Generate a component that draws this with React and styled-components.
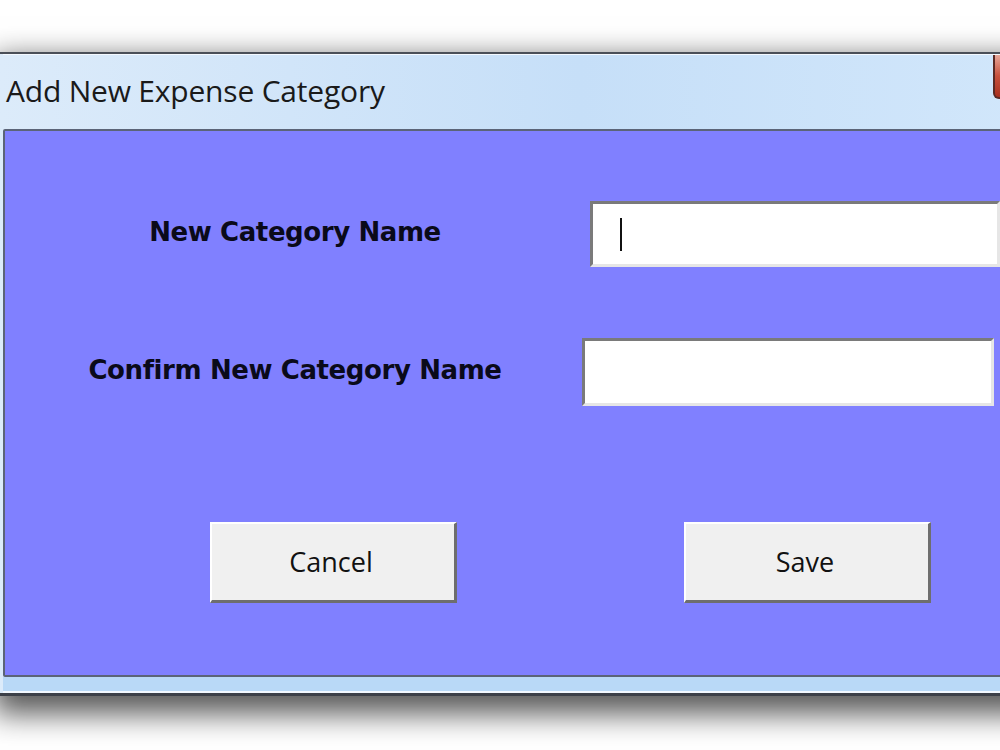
import React from 'react';
import styled, { createGlobalStyle } from 'styled-components';

const GlobalStyle = createGlobalStyle`
  html, body {
    margin: 0;
    padding: 0;
    background: #fff;
  }
`;

const Page = styled.div`
  width: 1000px;
  height: 750px;
  overflow: hidden;
  padding-top: 52px;
  box-sizing: border-box;
  background: #fff;
`;

const Window = styled.div`
  width: 1055px;
  box-sizing: border-box;
  border-top: 2px solid #4a4f58;
  border-bottom: 3px solid #3c4048;
  background: linear-gradient(90deg, #dcebfa 0%, #c6dff8 55%, #d2e7fb 100%);
  box-shadow: 0 12px 28px 6px rgba(0, 0, 0, 0.65);
  padding: 0 12px 0 3px;
`;

const TitleBar = styled.div`
  display: flex;
  justify-content: space-between;
  align-items: flex-start;
  height: 74px;
  border-top: 1px solid #f4f9ff;
`;

const Title = styled.div`
  padding: 15px 0 0 3px;
  font-family: "Open Sans", "Noto Sans", sans-serif;
  font-size: 30px;
  color: #1a1a1a;
  letter-spacing: -0.2px;
`;

const CloseButton = styled.div`
  width: 50px;
  height: 44px;
  box-sizing: border-box;
  border: 2px solid #5a2a25;
  border-top: none;
  border-radius: 0 0 6px 6px;
  background: linear-gradient(180deg, #e8a89a 0%, #c7503c 50%, #a8301f 100%);
`;

const Client = styled.div`
  height: 548px;
  box-sizing: border-box;
  border: 2px solid #5b6478;
  border-radius: 2px;
  background: #8080ff;
  padding-top: 70px;
  display: flex;
  flex-direction: column;
`;

const Row = styled.div`
  display: flex;
  align-items: center;
  margin-bottom: ${p => p.$gap}px;
`;

const Label = styled.div`
  width: 580px;
  padding-bottom: 4px;
  text-align: center;
  font-family: "DejaVu Sans", Verdana, sans-serif;
  font-weight: bold;
  font-size: 26px;
  color: #0a0a1a;
  letter-spacing: -0.4px;
`;

const Field = styled.div`
  margin-left: ${p => p.$indent}px;
  width: ${p => p.$width}px;
  height: ${p => p.$height}px;
  box-sizing: border-box;
  background: #fff;
  border-top: 3px solid #7a7a7a;
  border-left: 3px solid #7a7a7a;
  border-bottom: 3px solid #e6e6e6;
  border-right: 3px solid #e6e6e6;
  display: flex;
  align-items: center;
  padding-left: 27px;
`;

const Caret = styled.span`
  width: 2px;
  height: 33px;
  background: #111;
`;

const Buttons = styled.div`
  display: flex;
  gap: 227px;
  padding-left: 205px;
  margin-top: 116px;
`;

const Button = styled.button`
  width: 247px;
  height: 81px;
  box-sizing: border-box;
  background: #f0f0f0;
  border-top: 2px solid #ffffff;
  border-left: 2px solid #ffffff;
  border-bottom: 3px solid #6e6e6e;
  border-right: 3px solid #6e6e6e;
  font-family: "Open Sans", "Noto Sans", sans-serif;
  font-size: 27px;
  color: #111;
  padding: 0 4px 2px 0;
  cursor: pointer;
`;

const Footer = styled.div`
  height: 14px;
  background: #b9d9f7;
  border-bottom: 2px solid #f2f8ff;
`;

export default function App() {
  return (
    <>
      <GlobalStyle />
      <Page>
        <Window>
          <TitleBar>
            <Title>Add New Expense Category</Title>
            <CloseButton />
          </TitleBar>
          <Client>
            <Row $gap={71}>
              <Label>New Category Name</Label>
              <Field $indent={5} $width={410} $height={66}>
                <Caret />
              </Field>
            </Row>
            <Row $gap={0}>
              <Label>Confirm New Category Name</Label>
              <Field $indent={-3} $width={412} $height={68} />
            </Row>
            <Buttons>
              <Button>Cancel</Button>
              <Button>Save</Button>
            </Buttons>
          </Client>
          <Footer />
        </Window>
      </Page>
    </>
  );
}
